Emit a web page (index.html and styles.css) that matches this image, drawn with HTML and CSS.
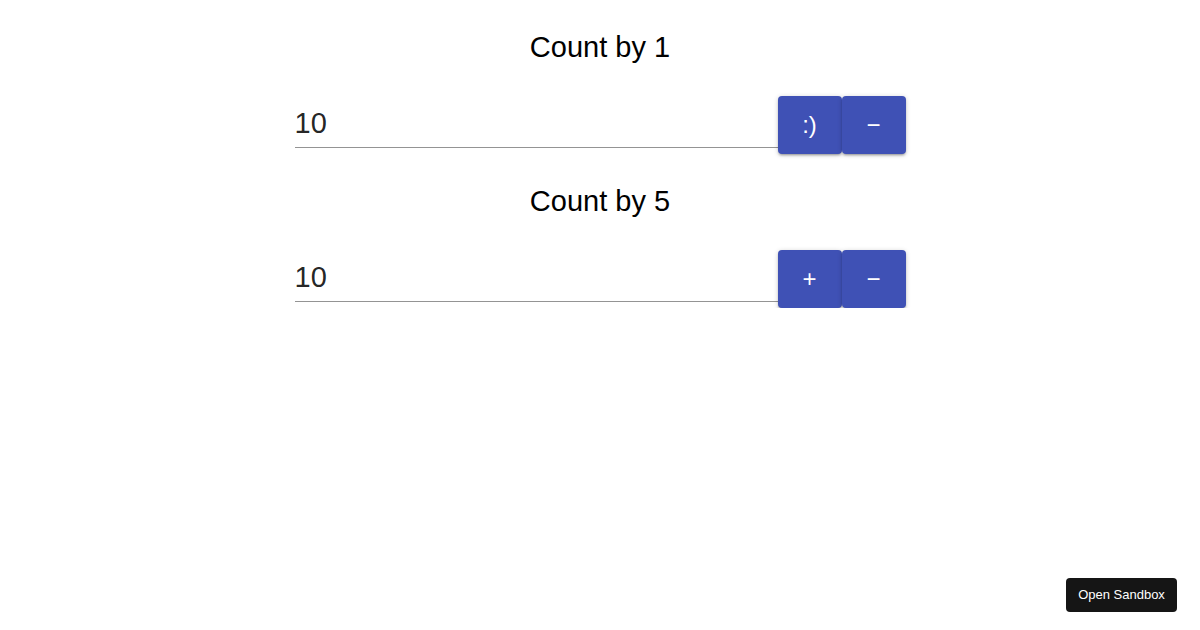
FILE: index.html
```html
<!DOCTYPE html>
<html lang="en">
<head>
    <meta charset="UTF-8">
    <meta name="viewport" content="width=device-width, initial-scale=1.0">
    <title>Counters</title>
    <link rel="stylesheet" href="styles.css">
</head>
<body>
    <div class="container">
        <div class="counter">
            <h2>Count by 1</h2>
            <div class="counter-row">
                <input class="counter-input" type="text" value="10">
                <button class="btn">:)</button>
                <button class="btn">&minus;</button>
            </div>
        </div>
        <div class="counter">
            <h2>Count by 5</h2>
            <div class="counter-row">
                <input class="counter-input" type="text" value="10">
                <button class="btn">+</button>
                <button class="btn">&minus;</button>
            </div>
        </div>
    </div>
    <a class="sandbox-link" href="#">Open Sandbox</a>
</body>
</html>
```

FILE: styles.css
```css
body {
    font-family: "Liberation Sans", Arial, sans-serif;
    margin: 0;
    padding: 0;
    background-color: #fff;
    color: #000;
}
.container {
    width: 611px;
    margin: 0 auto;
}
.counter {
    padding-top: 31px;
}
.counter h2 {
    margin: 0 0 33px;
    font-size: 29px;
    font-weight: normal;
    line-height: 32px;
    text-align: center;
}
.counter-row {
    display: flex;
    align-items: center;
}
.counter-input {
    flex: 1;
    min-width: 0;
    height: 46px;
    box-sizing: border-box;
    margin: 0;
    padding: 5px 0 8px;
    border: none;
    border-bottom: 1px solid rgba(0, 0, 0, 0.42);
    font-family: inherit;
    font-size: 29px;
    line-height: 32px;
    color: rgba(0, 0, 0, 0.87);
    background: transparent;
    outline: none;
}
.btn {
    width: 64px;
    height: 58px;
    margin: 0;
    padding: 0;
    border: none;
    border-radius: 4px;
    background-color: #3f51b5;
    color: #fff;
    font-family: inherit;
    font-size: 24px;
    cursor: pointer;
    box-shadow: 0 1px 5px rgba(0, 0, 0, 0.2), 0 2px 2px rgba(0, 0, 0, 0.14), 0 3px 1px -2px rgba(0, 0, 0, 0.12);
}
.sandbox-link {
    position: fixed;
    right: 23px;
    bottom: 18px;
    width: 111px;
    height: 34px;
    box-sizing: border-box;
    line-height: 34px;
    border-radius: 4px;
    background-color: #151515;
    color: #fff;
    font-size: 13px;
    text-align: center;
    text-decoration: none;
}
```
